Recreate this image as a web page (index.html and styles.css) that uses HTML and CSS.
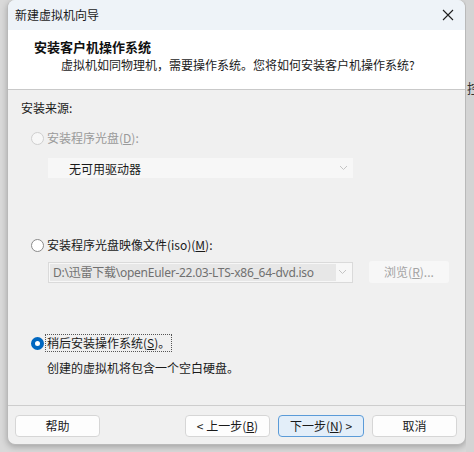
FILE: index.html
```html
<!DOCTYPE html>
<html lang="zh-CN">
<head>
<meta charset="utf-8">
<title>新建虚拟机向导</title>
<link rel="stylesheet" href="styles.css">
</head>
<body>
<div class="desk">
  <div class="window">
    <div class="titlebar">
      <span class="title">新建虚拟机向导</span>
      <svg class="close" width="12" height="12" viewBox="0 0 12 12"><path d="M1 1 L11 11 M11 1 L1 11" stroke="#1f1f1f" stroke-width="1.1" fill="none"/></svg>
    </div>
    <div class="header">
      <div class="h-title">安装客户机操作系统</div>
      <div class="h-sub">虚拟机如同物理机，需要操作系统。您将如何安装客户机操作系统?</div>
    </div>
    <div class="content">
      <div class="src-label">安装来源:</div>

      <div class="radio-row disabled r1">
        <span class="radio"></span>
        <span class="rlabel">安装程序光盘(<u>D</u>):</span>
      </div>
      <div class="select s1">
        <span class="sel-text">无可用驱动器</span>
        <svg class="chev" width="9" height="6" viewBox="0 0 9 6"><path d="M1 1 L4.5 4.5 L8 1" stroke="#c4c4c4" stroke-width="1" fill="none"/></svg>
      </div>

      <div class="radio-row r2">
        <span class="radio"></span>
        <span class="rlabel">安装程序光盘映像文件(iso)(<u>M</u>):</span>
      </div>
      <div class="iso-row">
        <div class="select s2">
          <span class="iso-text">D:\迅雷下载\openEuler-22.03-LTS-x86_64-dvd.iso</span>
          <svg class="chev" width="9" height="6" viewBox="0 0 9 6"><path d="M1 1 L4.5 4.5 L8 1" stroke="#c4c4c4" stroke-width="1" fill="none"/></svg>
        </div>
        <div class="browse">浏览(<u>R</u>)...</div>
      </div>

      <div class="radio-row r3">
        <span class="radio checked"></span>
        <span class="rlabel focus">稍后安装操作系统(<u>S</u>)。</span>
      </div>
      <div class="desc">创建的虚拟机将包含一个空白硬盘。</div>
    </div>
    <div class="footer">
      <div class="btn">帮助</div>
      <div class="spacer"></div>
      <div class="btn">&lt; 上一步(<u>B</u>)</div>
      <div class="btn primary">下一步(<u>N</u>) &gt;</div>
      <div class="btn">取消</div>
    </div>
  </div>
  <div class="side"><span class="side-char">控</span></div>
</div>
</body>
</html>
```

FILE: styles.css
```css
html, body {
  margin: 0;
  padding: 0;
}
body {
  width: 474px;
  height: 452px;
  overflow: hidden;
  background: #d9d9d9;
  font-family: "Noto Sans CJK SC", "Noto Sans", sans-serif;
  font-size: 12px;
  color: #1a1a1a;
}
.desk {
  display: flex;
  height: 452px;
  padding-left: 7px;
  box-sizing: border-box;
}
.window {
  width: 459px;
  height: 445px;
  background: #f0f0f0;
  border: 1px solid #b9b9b9;
  border-top: none;
  border-radius: 8px;
  box-sizing: border-box;
  display: flex;
  flex-direction: column;
  overflow: hidden;
  box-shadow: 0 2px 6px rgba(0,0,0,0.25);
  flex: none;
}
.titlebar {
  height: 30px;
  flex: none;
  background: #eef3f8;
  display: flex;
  align-items: center;
  justify-content: space-between;
  padding: 0 11px 0 7px;
}
.title {
  font-size: 12px;
  color: #1a1a1a;
  line-height: 16px;
}
.close {
  display: block;
}
.header {
  flex: none;
  background: #ffffff;
  border-bottom: 1px solid #c9c9c9;
  box-sizing: border-box;
  height: 60px;
  padding-top: 8px;
}
.h-title {
  font-weight: bold;
  font-size: 13px;
  line-height: 18px;
  padding-left: 26px;
  color: #111;
}
.h-sub {
  line-height: 18px;
  padding-left: 53px;
  color: #1a1a1a;
}
.content {
  flex: 1;
  padding: 9px 0 0 0;
}
.src-label {
  line-height: 18px;
  padding-left: 13px;
}
.radio-row {
  display: flex;
  align-items: center;
  height: 18px;
  padding-left: 23px;
}
.r1 { margin-top: 12px; }
.r2 { margin-top: 58px; }
.r3 { margin-top: 51px; }
.radio {
  width: 13px;
  height: 13px;
  border-radius: 50%;
  border: 1px solid #8a8a8a;
  background: #ffffff;
  box-sizing: border-box;
  margin-right: 3px;
  flex: none;
}
.disabled .radio {
  border-color: #cfcfcf;
  background: #f7f7f7;
}
.disabled .rlabel {
  color: #9a9a9a;
}
.radio.checked {
  border: 4px solid #0067c0;
  background: #ffffff;
}
.rlabel {
  line-height: 16px;
}
.focus {
  outline: 1px dotted #555;
  outline-offset: 0;
  padding: 0 1px;
  margin-left: -1px;
}
.select {
  height: 20px;
  width: 305px;
  margin-left: 40px;
  display: flex;
  align-items: center;
  justify-content: space-between;
  box-sizing: border-box;
}
.s1 {
  margin-top: 11px;
  background: #f7f7f7;
  padding: 0 5px 0 21px;
}
.sel-text {
  color: #1a1a1a;
}
.iso-row {
  display: flex;
  align-items: center;
  margin-top: 7px;
  margin-left: 40px;
}
.s2 {
  margin-left: 0;
  height: 21px;
  border: 1px solid #dadada;
  background: #f7f7f7;
  padding: 1px 5px 1px 1px;
}
.iso-text {
  background: #e7e7e7;
  color: #707070;
  height: 17px;
  line-height: 17px;
  width: 286px;
  padding-left: 3px;
  box-sizing: border-box;
  white-space: nowrap;
  overflow: hidden;
  font-family: "Noto Sans", "Noto Sans CJK SC", sans-serif;
  letter-spacing: -0.25px;
}
.chev {
  display: block;
  flex: none;
}
.browse {
  margin-left: 16px;
  width: 80px;
  height: 22px;
  line-height: 22px;
  text-align: center;
  background: #f7f7f7;
  color: #a3a3a3;
  border-radius: 3px;
}
.desc {
  margin-top: 7px;
  padding-left: 39px;
  line-height: 18px;
}
.footer {
  flex: none;
  height: 39px;
  border-top: 1px solid #cdcdcd;
  box-sizing: border-box;
  display: flex;
  align-items: flex-start;
  padding: 9px 8px 0 7px;
  gap: 8px;
}
.spacer {
  flex: 1;
}
.btn {
  width: 85px;
  height: 22px;
  line-height: 20px;
  text-align: center;
  background: #fdfdfd;
  border: 1px solid #d6d6d6;
  border-radius: 4px;
  box-sizing: border-box;
  color: #1a1a1a;
}
.btn.primary {
  width: 86px;
  background: #e3eef9;
  border-color: #5b9bd8;
}
.side {
  flex: 1;
  padding-top: 79px;
  overflow: hidden;
  background: #d4d4d4;
}
.side-char {
  display: block;
  margin-left: 1px;
  font-size: 13px;
  line-height: 18px;
  color: #333;
  white-space: nowrap;
}
u {
  text-decoration: underline;
  text-underline-offset: 1px;
}
```
